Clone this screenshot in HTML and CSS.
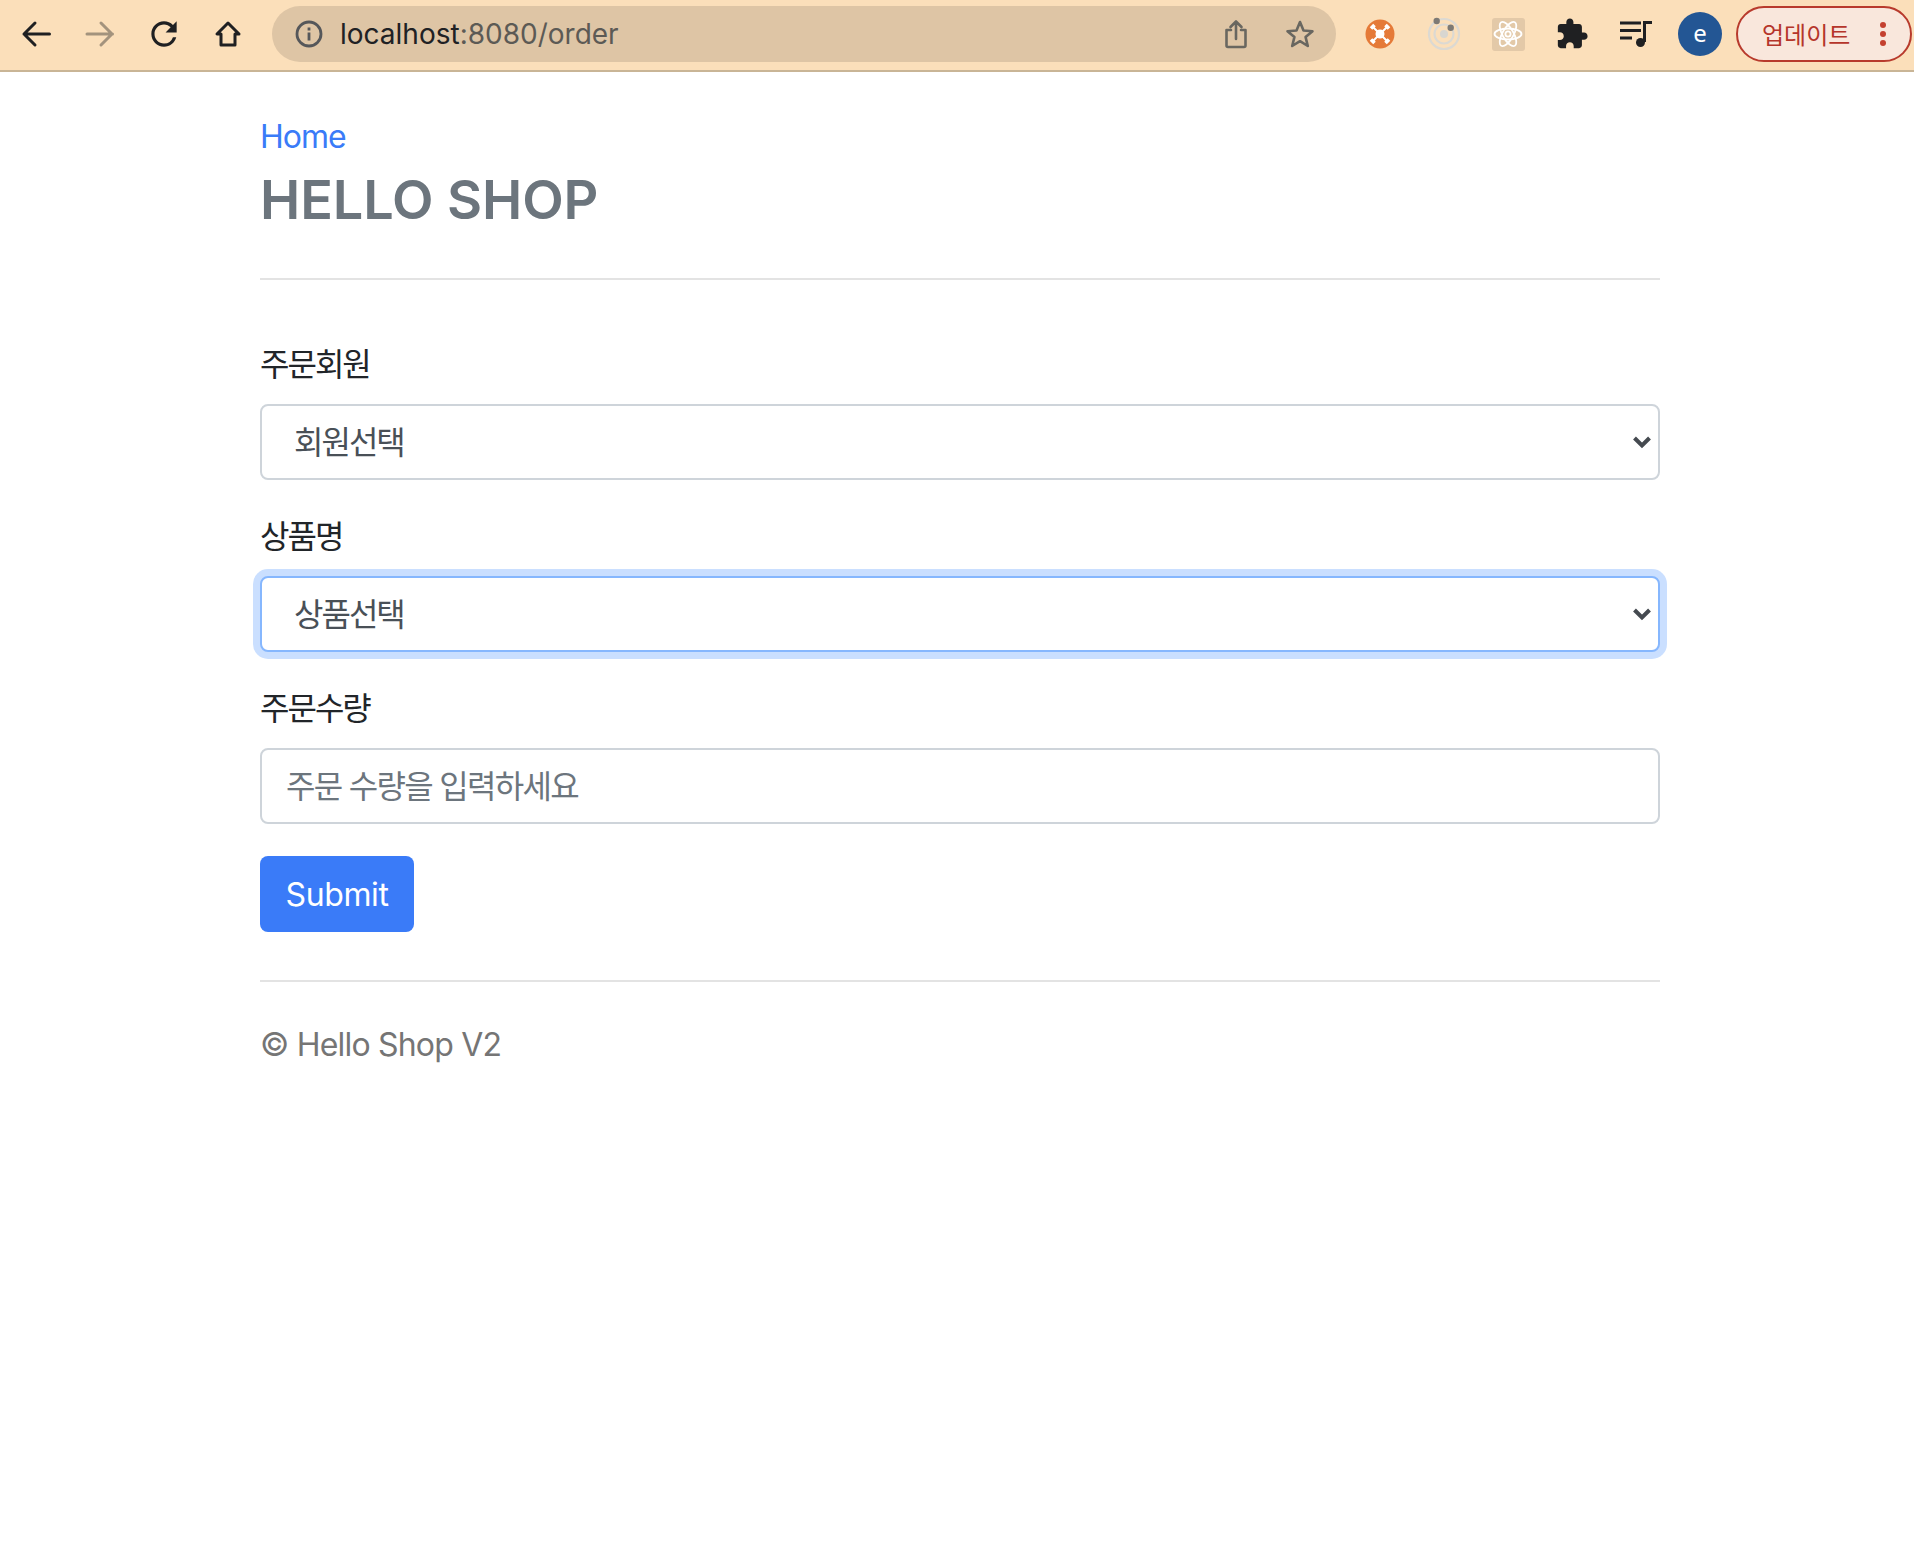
FILE: index.html
```html
<!DOCTYPE html>
<html lang="ko">
<head>
<meta charset="utf-8">
<title>Hello Shop</title>
<link rel="stylesheet" href="styles.css">
</head>
<body>
<header class="toolbar">
  <div class="tool"><svg width="32" height="32" viewBox="0 0 32 32" class="stroke-dark"><path d="M29.500 16H4M15 5 4 16l11 11"/></svg></div>
  <div class="tool"><svg width="32" height="32" viewBox="0 0 32 32" class="stroke-muted"><path d="M3 16h25.500M17 5l11 11-11 11"/></svg></div>
  <div class="tool"><svg width="38" height="38" viewBox="0 0 24 24" class="fill-dark"><path d="M17.650 6.350A7.958 7.958 0 0 0 12 4c-4.420 0-7.990 3.580-7.990 8s3.570 8 7.990 8c3.730 0 6.840-2.550 7.730-6h-2.080A5.990 5.990 0 0 1 12 18c-3.310 0-6-2.690-6-6s2.690-6 6-6c1.660 0 3.140.690 4.220 1.780L13 11h7V4l-2.350 2.350z"/></svg></div>
  <div class="tool"><svg width="32" height="32" viewBox="0 0 32 32" class="stroke-dark"><path d="M16 5 5 16h4v11h14V16h4z"/></svg></div>
  <div class="omnibox">
    <svg width="28" height="28" viewBox="0 0 28 28" class="info"><circle cx="14" cy="14" r="12"/><path d="M14 12.500v8M14 7.500v3"/></svg>
    <div class="url"><span class="host">localhost</span>:8080/order</div>
    <svg width="32" height="32" viewBox="0 0 32 32" class="omni-icon share"><path d="M11 12H6.500v15.500a1.500 1.500 0 0 0 1.500 1.500h16a1.500 1.500 0 0 0 1.500-1.500V12H21M16 21V3.500M10.500 9 16 3.500 21.500 9"/></svg>
    <svg width="32" height="32" viewBox="0 0 32 32" class="omni-icon star"><path d="m16 4 3.500 8.500 9 .7-6.900 5.900 2.200 8.900L16 23.200 8.200 28l2.200-8.900-6.900-5.900 9-.7z"/></svg>
  </div>
  <div class="tool"><svg width="30" height="30" viewBox="0 0 30 30"><circle cx="15" cy="15" r="14.500" class="orange"/><path d="M8 8l14 14M22 8 8 22" class="orange-x"/><path d="M6 9.500 9.500 6M20.500 6 24 9.500M6 20.500 9.500 24M20.500 24l3.500-3.500" class="orange-end"/><circle cx="15" cy="15" r="4.500" class="white"/></svg></div>
  <div class="tool"><svg width="34" height="34" viewBox="0 0 34 34" class="radar"><circle cx="17" cy="17" r="15"/><circle cx="17" cy="17" r="9.500"/><circle cx="17" cy="17" r="4" class="radar-core"/><circle cx="9.700" cy="4" r="3.200" class="radar-dot"/><circle cx="23.700" cy="10.700" r="3.200" class="radar-dot"/></svg></div>
  <div class="tool"><div class="react-tile"><svg width="30" height="30" viewBox="0 0 30 30" class="atom"><ellipse cx="15" cy="15" rx="13.500" ry="5.500"/><ellipse cx="15" cy="15" rx="13.500" ry="5.500" transform="rotate(60 15 15)"/><ellipse cx="15" cy="15" rx="13.500" ry="5.500" transform="rotate(120 15 15)"/><circle cx="15" cy="15" r="2.600"/></svg></div></div>
  <div class="tool"><svg width="34" height="34" viewBox="0 0 24 24" class="fill-dark"><path d="M20.500 11H19V7c0-1.100-.9-2-2-2h-4V3.500C13 2.120 11.880 1 10.500 1S8 2.120 8 3.500V5H4c-1.100 0-1.990.9-1.990 2v3.800H3.500c1.490 0 2.700 1.210 2.700 2.700s-1.210 2.700-2.700 2.700H2V20c0 1.100.9 2 2 2h3.800v-1.500c0-1.490 1.210-2.700 2.700-2.700 1.490 0 2.700 1.210 2.700 2.700V22H17c1.100 0 2-.9 2-2v-4h1.500c1.380 0 2.500-1.120 2.500-2.500S21.880 11 20.500 11z"/></svg></div>
  <div class="tool"><svg width="34" height="28" viewBox="0 0 34 28" class="media"><path d="M1 3h21M1 10.500h21M1 18h12M25.500 22V2.500H33"/><circle cx="21.500" cy="22.500" r="4.500" class="media-note"/></svg></div>
  <div class="avatar">e</div>
  <div class="update">
    <span class="update-label">업데이트</span>
    <svg width="8" height="26" viewBox="0 0 8 26" class="update-dots"><circle cx="4" cy="4" r="3"/><circle cx="4" cy="13" r="3"/><circle cx="4" cy="22" r="3"/></svg>
  </div>
</header>
<main class="container">
  <div class="page-header">
    <a class="home-link" href="#">Home</a>
    <h3 class="brand">HELLO SHOP</h3>
  </div>
  <form class="order-form">
    <div class="form-group">
      <label class="form-label">주문회원</label>
      <select class="control select"><option>회원선택</option></select>
    </div>
    <div class="form-group">
      <label class="form-label">상품명</label>
      <select class="control select focused"><option>상품선택</option></select>
    </div>
    <div class="form-group">
      <label class="form-label">주문수량</label>
      <input class="control text-input" type="text" placeholder="주문 수량을 입력하세요">
    </div>
    <button class="submit" type="button">Submit</button>
  </form>
  <footer class="page-footer">
    <p>© Hello Shop V2</p>
  </footer>
</main>
</body>
</html>
```
FILE: styles.css
```css
* { box-sizing: border-box; }
html, body { margin: 0; padding: 0; background: #fff; }
body {
  font-family: Inter, "Noto Sans CJK KR", sans-serif;
  font-size: 32px;
  line-height: 48px;
  color: #212529;
  min-height: 1554px;
}
.toolbar {
  display: flex;
  align-items: center;
  height: 72px;
  padding: 0 2px 2px 4px;
  background: #fbdfba;
  border-bottom: 2px solid #c9b596;
}
.tool {
  width: 64px;
  height: 64px;
  flex: none;
  display: flex;
  align-items: center;
  justify-content: center;
}
.tool svg { display: block; }
.stroke-dark, .stroke-muted, .info, .omni-icon, .media, .radar, .atom, .update-dots { fill: none; }
.stroke-dark { stroke: #1f2022; stroke-width: 3; stroke-linejoin: round; stroke-linecap: round; }
.stroke-muted { stroke: #a3937d; stroke-width: 3; stroke-linecap: round; stroke-linejoin: round; }
.fill-dark { fill: #1f2022; }
.omnibox {
  flex: none;
  width: 1064px;
  height: 56px;
  margin: 0 12px;
  padding: 0 20px 0 23px;
  display: flex;
  align-items: center;
  background: #dec5a5;
  border-radius: 28px;
}
.info { stroke: #55575a; stroke-width: 2.800; flex: none; }
.url {
  margin-left: 17px;
  font-family: Inter, sans-serif;
  font-size: 28px;
  line-height: 40px;
  color: #5c5a55;
  flex: 1;
}
.host { color: #202124; }
.omni-icon { flex: none; stroke: #696760; stroke-width: 2.600; stroke-linecap: round; stroke-linejoin: round; }
.star { margin-left: 32px; }
.orange { fill: #e57a38; }
.orange-x { stroke: #fff; stroke-width: 2; fill: none; }
.orange-end { stroke: #fff; stroke-width: 3.600; fill: none; }
.white { fill: #fff; }
.radar { stroke: #dcd9d2; stroke-width: 2.200; }
.radar-core { fill: #d8d6d0; stroke: none; }
.radar-dot { fill: #7d7a75; stroke: none; }
.react-tile {
  width: 33px;
  height: 33px;
  background: #e3c9a8;
  border-radius: 3px;
  display: flex;
  align-items: center;
  justify-content: center;
}
.atom { stroke: #fff; stroke-width: 1.800; }
.media { stroke: #1f2022; stroke-width: 3; }
.media-note { fill: #1f2022; stroke: none; }
.avatar {
  flex: none;
  width: 44px;
  height: 44px;
  margin: 0 10px;
  border-radius: 50%;
  background: #235694;
  color: #fff;
  font-family: "Noto Sans", sans-serif;
  font-size: 24px;
  line-height: 42px;
  text-align: center;
}
.update {
  flex: none;
  width: 176px;
  height: 56px;
  margin-left: 4px;
  padding: 0 23px 0 24px;
  display: flex;
  align-items: center;
  justify-content: space-between;
  background: #f9e7dc;
  border: 2px solid #b83a2c;
  border-radius: 28px;
}
.update-label {
  font-family: "Noto Sans CJK KR", sans-serif;
  font-size: 24px;
  line-height: 32px;
  color: #b5352a;
}
.update-dots { fill: #c4402f; }
.container { width: 1400px; margin-left: 260px; padding-top: 41px; letter-spacing: -.8px; }
.page-header { border-bottom: 2px solid #e3e3e3; height: 167px; margin-bottom: 60px; }
.home-link { display: block; color: #3a7bf8; text-decoration: none; letter-spacing: -1px; }
.brand {
  margin: 5px 0 0;
  font-size: 54px;
  line-height: 68px;
  font-weight: 600;
  letter-spacing: -.1px;
  color: #6c757d;
}
.form-group { margin-bottom: 32px; }
.form-label { display: block; margin-bottom: 16px; height: 48px; padding-top: 1px; letter-spacing: -2px; }
.control {
  display: block;
  width: 100%;
  height: 76px;
  background-color: #fff;
  border: 2px solid #ced4da;
  border-radius: 8px;
  font-family: Inter, "Noto Sans CJK KR", sans-serif;
  font-size: 32px;
  letter-spacing: -2px;
  color: #495057;
  outline: none;
}
.select {
  appearance: none;
  padding: 0 60px 0 32px;
  background-image: url("data:image/svg+xml,%3Csvg xmlns='http://www.w3.org/2000/svg' width='20' height='16' viewBox='0 0 20 16'%3E%3Cpath d='M2.500 4l7.500 7.500L17.500 4' fill='none' stroke='%23454a50' stroke-width='4'/%3E%3C/svg%3E");
  background-repeat: no-repeat;
  background-position: right 6px center;
}
.focused {
  border-color: #86b7fe;
  box-shadow: 0 0 0 7px rgba(13, 110, 253, .22);
}
.text-input { padding: 0 24px; letter-spacing: -1.700px; }
.text-input::placeholder { color: #6c757d; opacity: 1; }
.submit {
  display: block;
  width: 154px;
  height: 76px;
  padding: 0;
  border: 0;
  border-radius: 8px;
  background: #3a7bf8;
  color: #fff;
  font-family: Inter, sans-serif;
  font-size: 32px;
  letter-spacing: -.4px;
}
.page-footer {
  margin-top: 48px;
  border-top: 2px solid #e3e3e3;
  padding-top: 39px;
  color: #757575;
}
.page-footer p { margin: 0; }
```
